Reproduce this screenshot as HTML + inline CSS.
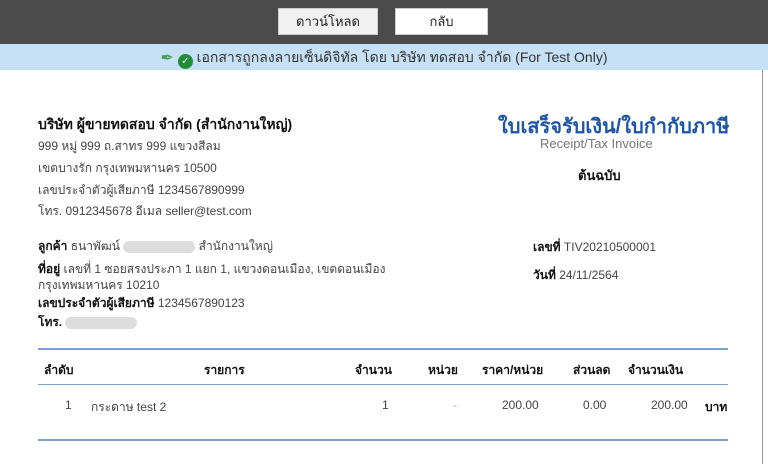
<!DOCTYPE html>
<html><head><meta charset="utf-8"><style>
*{margin:0;padding:0;box-sizing:border-box}
body{width:768px;height:464px;overflow:hidden;background:#fff;font-family:"Liberation Sans",sans-serif;position:relative;color:#333}
.top{position:absolute;left:0;top:0;width:768px;height:44px;background:#4b4b4b}
.btn{position:absolute;top:8px;height:27px;background:#fff;border:1px solid #ccc;font-size:13px;color:#222;text-align:center;line-height:25px}
.ban{position:absolute;left:0;top:44px;width:768px;height:26px;background:#c6e1f5;font-size:14px;color:#333;text-align:center;line-height:26px}
.edge{position:absolute;left:762px;top:70px;width:1px;height:394px;background:#999}
.a{position:absolute;white-space:nowrap;font-size:12px;color:#444}
b{color:#111}
.blur{display:inline-block;width:72px;height:12px;background:#ddd;border-radius:6px;vertical-align:middle}
.hl{position:absolute;left:38px;width:690px;height:2px;background:#7f9fd0}
.th{position:absolute;top:361px;font-size:12px;font-weight:bold;color:#111}
.td{position:absolute;top:398px;font-size:12px;color:#444}
</style></head><body>
<div class="top"></div>
<div class="btn" style="left:278px;width:100px;background:#f2f2f2">ดาวน์โหลด</div>
<div class="btn" style="left:395px;width:93px">กลับ</div>
<div class="ban"><span style="color:#4a9a5a;font-size:16px;vertical-align:-1px">&#x2712;</span> <span style="display:inline-block;width:15px;height:15px;border-radius:8px;background:#1f8f35;color:#fff;font-size:10px;line-height:15px;vertical-align:-2px">✓</span> เอกสารถูกลงลายเซ็นดิจิทัล โดย บริษัท ทดสอบ จำกัด (For Test Only)</div>
<div class="edge"></div>
<div class="a" style="left:38px;top:114px;font-size:14px;font-weight:bold;color:#111">บริษัท ผู้ขายทดสอบ จำกัด (สำนักงานใหญ่)</div>
<div class="a" style="left:38px;top:137px">999 หมู่ 999 ถ.สาทร 999 แขวงสีลม</div>
<div class="a" style="left:38px;top:159px">เขตบางรัก  กรุงเทพมหานคร 10500</div>
<div class="a" style="left:38px;top:181px">เลขประจำตัวผู้เสียภาษี 1234567890999</div>
<div class="a" style="left:38px;top:202px">โทร. 0912345678  อีเมล seller@test.com</div>
<div class="a" style="left:38px;top:237px"><b>ลูกค้า</b> ธนาพัฒน์ <span class="blur"></span> สำนักงานใหญ่</div>
<div class="a" style="left:38px;top:260px"><b>ที่อยู่</b> เลขที่ 1 ซอยสรงประภา 1 แยก 1, แขวงดอนเมือง, เขตดอนเมือง</div>
<div class="a" style="left:38px;top:276px">กรุงเทพมหานคร  10210</div>
<div class="a" style="left:38px;top:294px"><b>เลขประจำตัวผู้เสียภาษี</b> 1234567890123</div>
<div class="a" style="left:38px;top:313px"><b>โทร.</b> <span class="blur"></span></div>
<div class="a" style="left:498px;top:110px;font-size:20px;font-weight:bold;color:#1d56a8">ใบเสร็จรับเงิน/ใบกำกับภาษี</div>
<div class="a" style="left:540px;top:136px;font-size:13px;color:#777">Receipt/Tax Invoice</div>
<div class="a" style="left:578px;top:165px;font-size:13px;font-weight:bold;color:#111">ต้นฉบับ</div>
<div class="a" style="left:533px;top:238px"><b>เลขที่</b> TIV20210500001</div>
<div class="a" style="left:533px;top:266px"><b>วันที่</b> 24/11/2564</div>
<div class="hl" style="top:348px"></div>
<div class="hl" style="top:384px;height:1px"></div>
<div class="hl" style="top:439px"></div>
<div class="th" style="left:44px">ลำดับ</div>
<div class="th" style="left:204px">รายการ</div>
<div class="th" style="left:355px">จำนวน</div>
<div class="th" style="left:428px">หน่วย</div>
<div class="th" style="left:482px">ราคา/หน่วย</div>
<div class="th" style="left:573px">ส่วนลด</div>
<div class="th" style="left:628px">จำนวนเงิน</div>
<div class="td" style="left:65px">1</div>
<div class="td" style="left:91px">กระดาษ test 2</div>
<div class="td" style="left:382px">1</div>
<div class="td" style="left:453px;color:#aaa">-</div>
<div class="td" style="left:502px">200.00</div>
<div class="td" style="left:583px">0.00</div>
<div class="td" style="left:651px">200.00</div>
<div class="td" style="left:705px;font-weight:bold;color:#111">บาท</div>
</body></html>
